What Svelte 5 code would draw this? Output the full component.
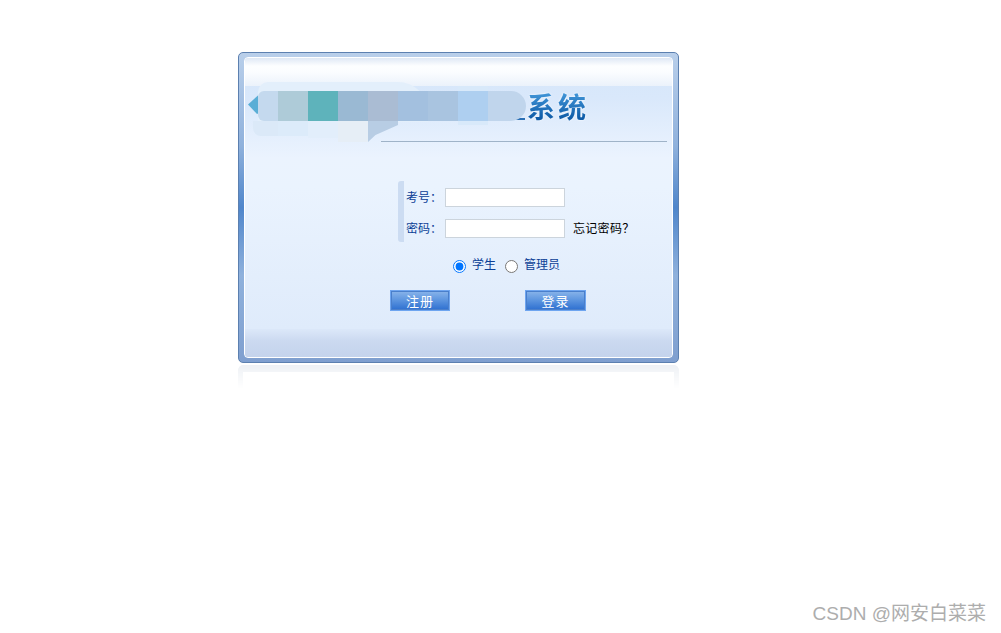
<script>
  const cells = [
    { w: 20, c: '#c4d9ee' }, { w: 30, c: '#aecbd8' }, { w: 30, c: '#5eb3bb' }, { w: 30, c: '#9ab9d3' },
    { w: 30, c: '#aabcd3' }, { w: 30, c: '#a3c0df' }, { w: 30, c: '#a9c4e0' }, { w: 30, c: '#aecff0' }, { w: 38, c: '#c0d5ec' }
  ];
  const lower = [
    { w: 25, h: 15, c: '#dbe9f8' }, { w: 30, h: 15, c: '#dcebfa' }, { w: 30, h: 17, c: '#e2eefb' }, { w: 30, h: 21, c: '#e6eef6' }, { w: 30, h: 21, c: '#b8cde4' }
  ];
  let role = $state('student');
</script>

<div class="page">
  <div class="panel">
    <div class="inner">
      <div class="gloss"></div>
      <header class="head">
        <span class="title">系统</span>
      </header>
      <div class="rule"></div>

      <form class="form" onsubmit={(e) => e.preventDefault()}>
        <div class="fields">
          <label class="row">
            <span class="lab">考号：</span>
            <input type="text" class="inp" />
          </label>
          <label class="row">
            <span class="lab">密码：</span>
            <input type="password" class="inp" />
            <a class="forgot">忘记密码？</a>
          </label>
        </div>
        <div class="roles">
          <label class="radio"><input type="radio" name="role" value="student" bind:group={role} /><span>学生</span></label>
          <label class="radio"><input type="radio" name="role" value="admin" bind:group={role} /><span>管理员</span></label>
        </div>
        <div class="btns">
          <button type="button" class="btn">注册</button>
          <button type="submit" class="btn wide">登录</button>
        </div>
      </form>
      <div class="foot"></div>

      <div class="arrow"></div>
      <div class="remnant"></div>
      <div class="smudge"></div>
      <div class="smudge2"></div>
      <div class="mosaic">
        {#each cells as cell}
          <i style="width:{cell.w}px;background:{cell.c}"></i>
        {/each}
      </div>
      <div class="mosaic2">
        {#each lower as cell}
          <i style="width:{cell.w}px;height:{cell.h}px;background:{cell.c}"></i>
        {/each}
      </div>
    </div>
  </div>
  <div class="reflect"></div>
  <div class="mark">CSDN @网安白菜菜</div>
</div>

<style>
  :global(body) {
    margin: 0;
    background: #fff;
  }
  .page {
    position: relative;
    box-sizing: border-box;
    width: 1001px;
    height: 633px;
    padding: 52px 0 0 238px;
    overflow: hidden;
    font-family: "Noto Sans CJK SC", "Liberation Sans", sans-serif;
    font-size: 12px;
  }
  .panel {
    box-sizing: border-box;
    width: 441px;
    height: 311px;
    padding: 4px 5px 4px 5px;
    border: 1px solid #5c80b0;
    border-radius: 5px;
    background: linear-gradient(180deg, #b9cfea 0%, #8fb1dc 30%, #4f86cb 50%, #8fb1dc 72%, #7f9fcf 100%);
  }
  .inner {
    position: relative;
    box-sizing: border-box;
    height: 100%;
    display: flex;
    flex-direction: column;
    border: 1px solid #fff;
    border-radius: 4px;
    overflow: hidden;
    background: linear-gradient(180deg, #d5e6fa 0, #d9e8fb 40px, #ebf3fe 100px, #eaf3fe 130px, #dfebfb 270px);
  }
  .gloss {
    height: 28px;
    flex: none;
    background: linear-gradient(180deg, #dfe8f5 0, #fdfeff 8px, #fbfdff 14px, #ebf2fb 28px);
  }
  .head {
    height: 55px;
    flex: none;
    box-sizing: border-box;
    padding: 0 0 0 282px;
    display: flex;
    align-items: flex-start;
  }
  .title {
    font-size: 28px;
    line-height: 40px;
    font-weight: 700;
    letter-spacing: 3px;
    background: linear-gradient(180deg, #3f93d6 20%, #0f5ca8 80%);
    -webkit-background-clip: text;
    background-clip: text;
    color: transparent;
    filter: drop-shadow(0 0 1px #fff);
  }
  .rule {
    height: 1px;
    flex: none;
    margin: 0 5px 0 136px;
    background: #9fb3c8;
  }
  .form {
    flex: 1;
    display: flex;
    flex-direction: column;
    align-items: flex-start;
    padding: 45px 0 0 153px;
  }
  .fields {
    display: flex;
    flex-direction: column;
    gap: 11px;
    padding: 6px 0 4px 7px;
    margin-top: -6px;
    background: linear-gradient(#ccdcf2, #ccdcf2) left top / 6px 100% no-repeat;
    border-radius: 3px 0 0 3px;
  }
  .row {
    display: flex;
    align-items: center;
    height: 20px;
  }
  .lab {
    width: 40px;
    color: #0b3f96;
    white-space: nowrap;
    padding-left: 1px;
    box-sizing: border-box;
    margin-top: -2px;
  }
  .inp {
    box-sizing: border-box;
    width: 120px;
    height: 19px;
    margin: 0;
    padding: 0 2px;
    border: 1px solid #ccd4dc;
    background: #fff;
    outline: none;
  }
  .forgot {
    margin-left: 8px;
    color: #000;
    white-space: nowrap;
    letter-spacing: 0.3px;
    margin-top: -2px;
  }
  .roles {
    display: flex;
    gap: 9px;
    margin: 13px 0 0 55px;
    height: 20px;
    align-items: center;
    color: #0b3f96;
  }
  .radio {
    display: flex;
    align-items: center;
    gap: 6px;
  }
  .radio input {
    width: 13px;
    height: 13px;
    margin: 2px 0 0;
  }
  .radio span {
    margin-top: -3px;
  }
  .btns {
    display: flex;
    gap: 75px;
    margin: 15px 0 0 -8px;
  }
  .btn {
    box-sizing: border-box;
    width: 60px;
    height: 21px;
    padding: 0 0 2px;
    border: 1px solid #6ea5f0;
    outline: 1px solid #4a7fcb;
    outline-offset: -2px;
    background: linear-gradient(180deg, #8ab5ea 0%, #5f97e0 45%, #2d6fd0 100%);
    color: #fff;
    font: inherit;
    font-size: 13px;
    letter-spacing: 1px;
  }
  .wide {
    width: 61px;
  }
  .foot {
    height: 28px;
    flex: none;
    background: linear-gradient(180deg, #dce8f9 0, #cbd9f0 12px, #c4d3ec 100%);
  }
  .arrow {
    position: absolute;
    left: 3px;
    top: 37px;
    width: 15px;
    height: 19px;
    background: #5aaed6;
    clip-path: polygon(0 50%, 70% 0, 100% 0, 100% 85%, 60% 100%);
  }
  .remnant {
    position: absolute;
    left: 258px;
    top: 60px;
    width: 22px;
    height: 2px;
    background: #2a6fb5;
  }
  .smudge {
    position: absolute;
    left: 13px;
    top: 24px;
    width: 170px;
    height: 40px;
    background: #e3effb;
    border-radius: 10px 30px 0 0;
  }
  .smudge2 {
    position: absolute;
    left: 213px;
    top: 28px;
    width: 30px;
    height: 39px;
    background: #d8e9fa;
  }
  .mosaic {
    position: absolute;
    left: 13px;
    top: 33px;
    display: flex;
    height: 30px;
  }
  .mosaic2 {
    position: absolute;
    left: 8px;
    top: 63px;
    display: flex;
    align-items: flex-start;
  }
  .mosaic i,
  .mosaic2 i {
    display: block;
  }
  .mosaic i:first-child {
    border-radius: 6px 0 0 6px;
  }
  .mosaic i:last-child {
    border-radius: 0 16px 16px 0;
  }
  .mosaic2 i:first-child {
    border-radius: 0 0 0 8px;
  }
  .mosaic2 i:last-child {
    clip-path: polygon(0 0, 100% 0, 100% 4px, 25% 14px, 0 100%);
  }
  .reflect {
    box-sizing: border-box;
    width: 441px;
    height: 24px;
    margin-top: 2px;
    border: 5px solid #eef1f5;
    border-top-width: 7px;
    border-bottom: 0;
    border-radius: 5px 5px 0 0;
    background: #fff;
    -webkit-mask-image: linear-gradient(180deg, #000 0, transparent 100%);
    mask-image: linear-gradient(180deg, #000 0, transparent 100%);
  }
  .mark {
    position: absolute;
    right: 15px;
    bottom: 7px;
    font-family: "Liberation Sans", "Noto Sans CJK SC", sans-serif;
    font-size: 19px;
    line-height: 24px;
    color: #adadad;
  }
</style>
